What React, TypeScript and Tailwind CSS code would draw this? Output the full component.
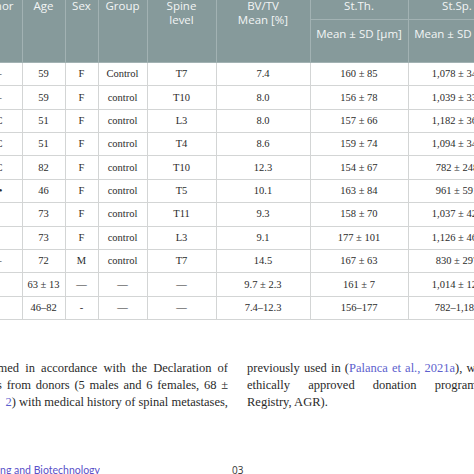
const ROWS = [
  { donor: '#1 –', pad: 'pr-[20px]', age: '59', sex: 'F', group: 'Control', spine: 'T7', bv: '7.4', th: '160 ± 85', sp: '1,078 ± 345' },
  { donor: '#2 –', pad: 'pr-[20px]', age: '59', sex: 'F', group: 'control', spine: 'T10', bv: '8.0', th: '156 ± 78', sp: '1,039 ± 338' },
  { donor: '#3 C', pad: 'pr-[19px]', age: '51', sex: 'F', group: 'control', spine: 'L3', bv: '8.0', th: '157 ± 66', sp: '1,182 ± 367' },
  { donor: '#4 C', pad: 'pr-[19px]', age: '51', sex: 'F', group: 'control', spine: 'T4', bv: '8.6', th: '159 ± 74', sp: '1,094 ± 341' },
  { donor: '#5 C', pad: 'pr-[19px]', age: '82', sex: 'F', group: 'control', spine: 'T10', bv: '12.3', th: '154 ± 67', sp: '782 ± 248' },
  { donor: '#6 •', pad: 'pr-[19px]', age: '46', sex: 'F', group: 'control', spine: 'T5', bv: '10.1', th: '163 ± 84', sp: '961 ± 591' },
  { donor: '#7', pad: 'pr-[26px]', age: '73', sex: 'F', group: 'control', spine: 'T11', bv: '9.3', th: '158 ± 70', sp: '1,037 ± 423' },
  { donor: '#8', pad: 'pr-[26px]', age: '73', sex: 'F', group: 'control', spine: 'L3', bv: '9.1', th: '177 ± 101', sp: '1,126 ± 468' },
  { donor: '#9 –', pad: 'pr-[20px]', age: '72', sex: 'M', group: 'control', spine: 'T7', bv: '14.5', th: '167 ± 63', sp: '830 ± 297' },
  { donor: 'Mean', pad: 'pr-[26px]', age: '63 ± 13', sex: '—', group: '—', spine: '—', bv: '9.7 ± 2.3', th: '161 ± 7', sp: '1,014 ± 128' },
  { donor: 'Range', pad: 'pr-[26px]', age: '46–82', sex: '-', group: '—', spine: '—', bv: '7.4–12.3', th: '156–177', sp: '782–1,182' },
]

const head = 'border border-[#a2b2b3] align-top pt-[6px] px-1 font-normal'
const cell = 'border border-[#d3d5d5] text-center align-middle px-1'

export default function App() {
  return (
    <div className="w-[474px] h-[474px] overflow-hidden bg-white">
      <table className="table-fixed border-collapse ml-[-40px] mt-[-8px] w-[546px] font-['Liberation_Serif',serif] text-[10.5px] text-[#2b2b2b]">
        <colgroup>
          <col className="w-[62px]" />
          <col className="w-[43px]" />
          <col className="w-[33px]" />
          <col className="w-[49px]" />
          <col className="w-[69px]" />
          <col className="w-[94px]" />
          <col className="w-[98px]" />
          <col className="w-[98px]" />
        </colgroup>
        <thead className="bg-[#869a9b] text-[#f2f5f5] font-['Open_Sans',sans-serif] text-[11.5px] leading-[14px]">
          <tr className="h-[27px]">
            <th rowSpan={2} className={`${head} text-right pr-[8px] border-l-0`}>Donor</th>
            <th rowSpan={2} className={head}>Age</th>
            <th rowSpan={2} className={head}>Sex</th>
            <th rowSpan={2} className={head}>Group</th>
            <th rowSpan={2} className={head}>
              Spine
              <br />
              level
            </th>
            <th rowSpan={2} className={head}>
              BV/TV
              <br />
              Mean [%]
            </th>
            <th className={head}>St.Th.</th>
            <th className={head}>St.Sp.</th>
          </tr>
          <tr className="h-[43px]">
            <th className={`${head} pt-[7px]`}>Mean ± SD [μm]</th>
            <th className={`${head} pt-[7px]`}>Mean ± SD [μm]</th>
          </tr>
        </thead>
        <tbody>
          {ROWS.map((r, i) => (
            <tr key={i} className="h-[23.36px]">
              <td className={`border border-[#d3d5d5] border-l-0 text-right whitespace-nowrap overflow-hidden ${r.pad}`}>
                {r.donor}
              </td>
              <td className={cell}>{r.age}</td>
              <td className={cell}>{r.sex}</td>
              <td className={cell}>{r.group}</td>
              <td className={cell}>{r.spine}</td>
              <td className={cell}>{r.bv}</td>
              <td className={cell}>{r.th}</td>
              <td className={`${cell} whitespace-nowrap`}>{r.sp}</td>
            </tr>
          ))}
        </tbody>
      </table>

      <div className="mt-[40px] flex gap-[19px] font-['Liberation_Serif',serif] text-[12.5px] leading-[17px] text-[#2a2a2a]">
        <div className="w-[228px] shrink-0 overflow-hidden text-right whitespace-nowrap">
          <div className="flex justify-end [word-spacing:3px]">
            <span>The study was performed in accordance with the Declaration of</span>
          </div>
          <div className="flex justify-end [word-spacing:1.6px]">
            <span>Helsinki. Specimens from donors (5 males and 6 females, 68 ±</span>
          </div>
          <div className="flex justify-end">
            <span>
              14 years, <span className="text-[#5d5fce]">Table</span>
              <span className="ml-[14px] text-[#5d5fce]">2</span>) with medical history of spinal metastases,
            </span>
          </div>
        </div>
        <div className="whitespace-nowrap">
          <div className="[word-spacing:1px]">
            previously used in (<span className="text-[#5d5fce]">Palanca et al., 2021a</span>), were obtained
          </div>
          <div className="[word-spacing:15px]">ethically approved donation program (Anatomic</div>
          <div>Registry, AGR).</div>
        </div>
      </div>

      <div className="mt-[52px] flex items-center text-[10.5px] leading-[14px] whitespace-nowrap">
        <div className="w-[100px] shrink-0 overflow-hidden flex justify-end font-['Lato',sans-serif] text-[#5a50c8]">
          <span>Frontiers in Bioengineering and Biotechnology</span>
        </div>
        <div className="ml-[132px] font-['Open_Sans',sans-serif] text-[10px] text-[#333]">03</div>
      </div>
    </div>
  )
}
